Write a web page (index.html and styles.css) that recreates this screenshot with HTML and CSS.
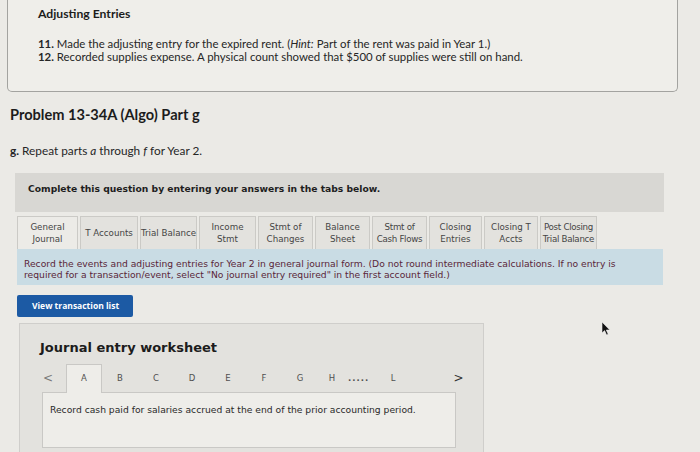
FILE: index.html
```html
<!DOCTYPE html>
<html>
<head>
<meta charset="utf-8">
<link rel="stylesheet" href="styles.css">
</head>
<body>
<div class="page">
  <section class="top-box">
    <h3 class="top-title">Adjusting Entries</h3>
    <p class="item"><b>11.</b> Made the adjusting entry for the expired rent. (<i>Hint:</i> Part of the rent was paid in Year 1.)</p>
    <p class="item"><b>12.</b> Recorded supplies expense. A physical count showed that $500 of supplies were still on hand.</p>
  </section>

  <h2 class="problem">Problem 13-34A (Algo) Part g</h2>
  <p class="part"><b>g.</b> Repeat parts <i>a</i> through <i>f</i> for Year 2.</p>

  <div class="complete">Complete this question by entering your answers in the tabs below.</div>

  <div class="tabs">
    <div class="tab active">General<br>Journal</div>
    <div class="tab">T Accounts</div>
    <div class="tab">Trial Balance</div>
    <div class="tab">Income<br>Stmt</div>
    <div class="tab">Stmt of<br>Changes</div>
    <div class="tab">Balance<br>Sheet</div>
    <div class="tab">Stmt of<br>Cash Flows</div>
    <div class="tab">Closing<br>Entries</div>
    <div class="tab">Closing T<br>Accts</div>
    <div class="tab">Post Closing<br>Trial Balance</div>
  </div>
  <div class="instructions">Record the events and adjusting entries for Year 2 in general journal form. (Do not round intermediate calculations. If no entry is required for a transaction/event, select "No journal entry required" in the first account field.)</div>

  <button class="view-btn">View transaction list</button>

  <section class="worksheet">
    <h3 class="ws-title">Journal entry worksheet</h3>
    <div class="nav">
      <span class="nav-arrow">&lt;</span>
      <span class="nav-tab current">A</span>
      <span class="nav-tab">B</span>
      <span class="nav-tab">C</span>
      <span class="nav-tab">D</span>
      <span class="nav-tab">E</span>
      <span class="nav-tab">F</span>
      <span class="nav-tab">G</span>
      <span class="nav-tab narrow">H</span>
      <span class="nav-dots">.....</span>
      <span class="nav-tab last">L</span>
      <span class="nav-spacer"></span>
      <span class="nav-arrow next">&gt;</span>
    </div>
    <div class="ws-content">Record cash paid for salaries accrued at the end of the prior accounting period.</div>
  </section>

  <svg class="cursor" width="10" height="15" viewBox="0 0 10 15"><path d="M1 1 L1 12 L3.6 9.6 L5.6 14 L7.2 13.3 L5.3 9 L8.8 9 Z" fill="#111" stroke="#eee" stroke-width="0.6"/></svg>
</div>
</body>
</html>
```

FILE: styles.css
```css
html, body {
  margin: 0;
  padding: 0;
}
body {
  background: #ebeae6;
  width: 700px;
  height: 452px;
  overflow: hidden;
}
.page {
  position: relative;
  width: 700px;
  height: 452px;
  font-family: Lato, "Liberation Sans", sans-serif;
  color: #1f1f1f;
}
.top-box {
  margin: 0 0 0 7px;
  width: 671px;
  height: 92px;
  box-sizing: border-box;
  border: 1px solid #a3a3a0;
  border-top: none;
  border-radius: 0 0 5px 5px;
  padding: 6px 0 0 30px;
  background: #efeeea;
}
.top-title {
  margin: 0;
  font-size: 12.2px;
  line-height: 15px;
  font-weight: 700;
  color: #1c1c1c;
}
.item {
  margin: 0;
  font-size: 11.4px;
  line-height: 13px;
  color: #262626;
}
.top-title + .item {
  margin-top: 16px;
}
.problem {
  margin: 14px 0 0 10px;
  font-size: 14.6px;
  line-height: 18px;
  font-weight: 700;
  color: #1c1c1c;
}
.part {
  margin: 20px 0 0 10px;
  font-size: 11.8px;
  line-height: 14px;
  color: #262626;
}
.complete {
  margin: 15px 0 0 15px;
  width: 649px;
  height: 39px;
  box-sizing: border-box;
  padding: 10px 0 0 13px;
  background: #d8d7d3;
  font-family: "DejaVu Sans", Verdana, sans-serif;
  font-weight: 700;
  font-size: 9.2px;
  line-height: 12px;
  color: #1e1e1e;
}
.tabs {
  display: flex;
  gap: 2px;
  margin: 4px 0 0 17px;
  height: 33px;
}
.tab {
  flex: none;
  display: flex;
  align-items: center;
  justify-content: center;
  text-align: center;
  box-sizing: border-box;
  height: 33px;
  border: 1px solid #cbcac6;
  border-bottom: none;
  background: #e3e2de;
  font-family: "DejaVu Sans", Verdana, sans-serif;
  font-size: 8.7px;
  line-height: 12px;
  color: #454545;
  white-space: nowrap;
}
.tab.active {
  background: #ecebe7;
}
.tab:nth-child(1) { width: 61px; }
.tab:nth-child(2) { width: 58px; }
.tab:nth-child(3) { width: 57px; }
.tab:nth-child(4) { width: 57px; }
.tab:nth-child(5) { width: 55px; }
.tab:nth-child(6) { width: 55px; }
.tab:nth-child(7) { width: 55px; }
.tab:nth-child(8) { width: 53px; }
.tab:nth-child(9) { width: 54px; }
.tab:nth-child(10) { width: 57px; }
.tab:nth-child(10), .tab:nth-child(7) {
  letter-spacing: -0.3px;
}
.instructions {
  margin: 0 0 0 17px;
  width: 646px;
  height: 36px;
  box-sizing: border-box;
  padding: 9px 8px 0 7px;
  background: #c9dce4;
  font-family: "DejaVu Sans", Verdana, sans-serif;
  font-size: 9.2px;
  line-height: 11px;
  color: #5a2638;
}
.view-btn {
  display: block;
  margin: 10px 0 0 17px;
  width: 116px;
  height: 22px;
  padding: 0 0 0 15px;
  text-align: left;
  border: none;
  border-radius: 2px;
  background: #1c5aa4;
  color: #ffffff;
  font-family: "Open Sans", Lato, sans-serif;
  font-weight: 700;
  font-size: 8.5px;
  line-height: 22px;
}
.worksheet {
  margin: 6px 0 0 19px;
  width: 465px;
  height: 140px;
  box-sizing: border-box;
  border: 1px solid #cfcecb;
  background: #e3e2de;
  padding: 16px 0 0 20px;
}
.ws-title {
  margin: 0;
  font-family: "DejaVu Sans", Verdana, sans-serif;
  font-size: 13px;
  line-height: 16px;
  font-weight: 700;
  color: #1c1c1c;
}
.nav {
  display: flex;
  align-items: stretch;
  margin: 8px 0 0 2px;
  width: 428px;
  height: 28px;
  font-family: "DejaVu Sans", Verdana, sans-serif;
  font-size: 8.5px;
  color: #505050;
}
.nav-arrow {
  width: 24px;
  display: flex;
  align-items: center;
  justify-content: flex-start;
  padding-left: 1px;
  box-sizing: border-box;
  font-size: 12px;
  color: #7a7a7a;
}
.nav-arrow.next {
  justify-content: center;
  color: #333;
}
.nav-tab {
  width: 36px;
  display: flex;
  align-items: center;
  justify-content: center;
  box-sizing: border-box;
}
.nav-tab.narrow {
  width: 28px;
}
.nav-tab.last {
  width: 30px;
}
.nav-tab.current {
  position: relative;
  z-index: 1;
  border: 1px solid #c9c8c5;
  border-bottom: none;
  background: #eeede9;
  height: 29px;
  margin-bottom: -1px;
  padding-bottom: 2px;
}
.nav-dots {
  width: 32px;
  display: flex;
  align-items: center;
  padding-left: 2px;
  box-sizing: border-box;
  letter-spacing: 1px;
  font-weight: 700;
}
.nav-spacer {
  flex: 1;
}
.ws-content {
  margin-left: 2px;
  width: 414px;
  height: 56px;
  box-sizing: border-box;
  border: 1px solid #c9c8c5;
  background: #eeede9;
  padding: 11px 7px 0 7px;
  font-family: "DejaVu Sans", Verdana, sans-serif;
  font-size: 9.2px;
  line-height: 11px;
  color: #2a2a2a;
}
.cursor {
  position: absolute;
  left: 601px;
  top: 321px;
}
```
